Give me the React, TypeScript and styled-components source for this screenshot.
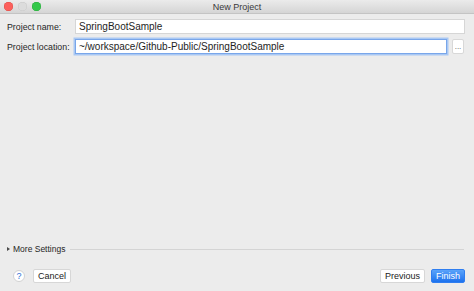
import React, { useState } from 'react';
import styled, { createGlobalStyle } from 'styled-components';

const GlobalStyle = createGlobalStyle`
  html, body {
    margin: 0;
    padding: 0;
    background: #ececec;
  }
  body {
    font-family: "Liberation Sans", Arial, sans-serif;
  }
`;

const Window = styled.div`
  width: 474px;
  height: 291px;
  display: flex;
  flex-direction: column;
  background: #ececec;
  color: #262626;
  font-size: 9px;
  overflow: hidden;
`;

const TitleBar = styled.div`
  height: 13px;
  display: flex;
  align-items: center;
  position: relative;
  background: linear-gradient(#ebebeb, #d5d5d5);
  border-bottom: 1px solid #c4c4c4;
`;

const Lights = styled.div`
  display: flex;
  gap: 5px;
  padding-left: 4px;
`;

const Light = styled.span<{ $color: string; $border: string }>`
  width: 9px;
  height: 9px;
  border-radius: 50%;
  background: ${(p) => p.$color};
  box-shadow: inset 0 0 0 0.5px ${(p) => p.$border};
`;

const Title = styled.div`
  position: absolute;
  left: 0;
  right: 0;
  text-align: center;
  font-size: 9px;
  color: #3a3a3a;
  pointer-events: none;
`;

const Content = styled.div`
  flex: 1;
  display: flex;
  flex-direction: column;
  gap: 5px;
  padding: 5px 9px 0 7px;
`;

const Row = styled.div`
  display: flex;
  align-items: center;
  height: 15px;
`;

const Label = styled.label`
  width: 68px;
  flex: none;
  font-size: 8.8px;
  white-space: nowrap;
`;

const Input = styled.input<{ $focused?: boolean }>`
  flex: 1;
  min-width: 0;
  height: 15px;
  box-sizing: border-box;
  padding: 0 3px;
  font: inherit;
  font-size: 10px;
  color: #1e1e1e;
  background: #fff;
  border: 1px solid ${(p) => (p.$focused ? '#79a6ea' : '#d6d6d6')};
  box-shadow: ${(p) => (p.$focused ? '0 0 0 1.5px #a9c8f3' : 'none')};
  outline: none;
`;

const BrowseButton = styled.button`
  width: 12px;
  height: 15px;
  margin-left: 5px;
  margin-right: 1px;
  padding: 0;
  border: 1px solid #d8d8d8;
  border-radius: 2px;
  background: #fff;
  font: inherit;
  font-size: 8px;
  color: #555;
  line-height: 10px;
`;

const MoreSettings = styled.div`
  display: flex;
  align-items: center;
  gap: 3px;
  padding: 0 10px 0 7px;
  height: 12px;
  margin-bottom: 13px;
  font-size: 8.5px;
`;

const Arrow = styled.span`
  width: 0;
  height: 0;
  border-top: 2.5px solid transparent;
  border-bottom: 2.5px solid transparent;
  border-left: 3.5px solid #4a4a4a;
`;

const Divider = styled.div`
  flex: 1;
  height: 1px;
  background: #d4d4d4;
  margin-left: 2px;
`;

const Footer = styled.div`
  display: flex;
  align-items: center;
  padding: 0 9px 8px 13px;
  height: 15px;
`;

const HelpButton = styled.button`
  width: 12px;
  height: 12px;
  border-radius: 50%;
  border: 1px solid #d2d2d2;
  background: #fff;
  color: #2f6fd6;
  font: inherit;
  font-size: 9px;
  padding: 0;
  line-height: 10px;
  margin-right: 8px;
`;

const Button = styled.button<{ $primary?: boolean }>`
  height: 14px;
  padding: 0 4px;
  font: inherit;
  font-size: 9px;
  line-height: 12px;
  border-radius: 2px;
  border: 1px solid ${(p) => (p.$primary ? '#2f7ef0' : '#d7d7d7')};
  background: ${(p) => (p.$primary ? 'linear-gradient(#5aa3fa, #1d72ee)' : '#fff')};
  color: ${(p) => (p.$primary ? '#fff' : '#222')};
`;

const Spacer = styled.div`
  flex: 1;
`;

const ButtonGroup = styled.div`
  display: flex;
  gap: 6px;
`;

const App: React.FC = () => {
  const [name, setName] = useState('SpringBootSample');
  const [location, setLocation] = useState('~/workspace/Github-Public/SpringBootSample');

  return (
    <>
      <GlobalStyle />
      <Window>
        <TitleBar>
          <Lights>
            <Light $color="#fc605c" $border="#de4a45" />
            <Light $color="#dcdcdc" $border="#c8c8c8" />
            <Light $color="#34c84a" $border="#27a83a" />
          </Lights>
          <Title>New Project</Title>
        </TitleBar>
        <Content>
          <Row>
            <Label>Project name:</Label>
            <Input value={name} onChange={(e) => setName(e.target.value)} />
          </Row>
          <Row>
            <Label>Project location:</Label>
            <Input $focused value={location} onChange={(e) => setLocation(e.target.value)} />
            <BrowseButton>...</BrowseButton>
          </Row>
        </Content>
        <MoreSettings>
          <Arrow />
          <span>More Settings</span>
          <Divider />
        </MoreSettings>
        <Footer>
          <HelpButton>?</HelpButton>
          <Button>Cancel</Button>
          <Spacer />
          <ButtonGroup>
            <Button>Previous</Button>
            <Button $primary>Finish</Button>
          </ButtonGroup>
        </Footer>
      </Window>
    </>
  );
};

export default App;
